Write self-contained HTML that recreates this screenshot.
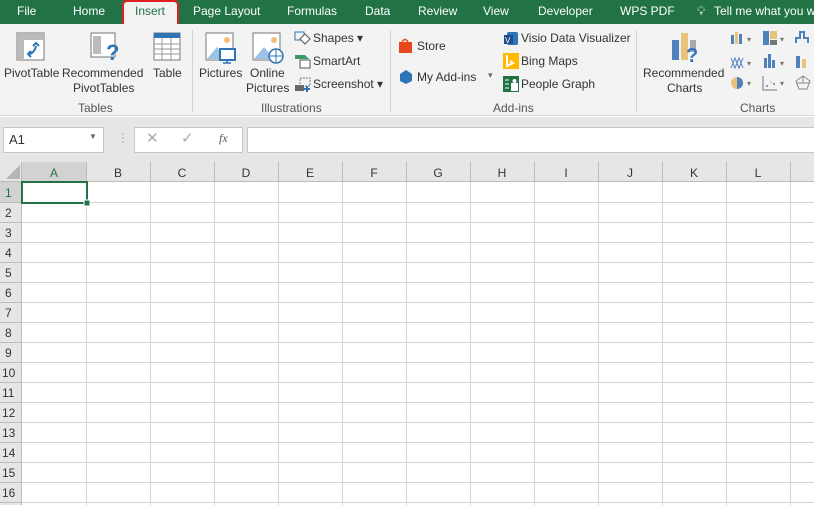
<!DOCTYPE html>
<html><head><style>
*{margin:0;padding:0;box-sizing:border-box}
body{width:814px;height:505px;overflow:hidden;background:#fff;font-family:"Segoe UI","Liberation Sans",sans-serif;font-size:12px;color:#222;position:relative}
.abs{position:absolute}
#tabs{left:0;top:0;width:814px;height:24px;background:#217346}
.tab{position:absolute;top:4px;color:#fff;font-size:12px;white-space:nowrap}
#rib{left:0;top:24px;width:814px;height:92px;background:#f3f3f3;border-bottom:1px solid #d6d6d6}
.t{position:absolute;font-size:12px;color:#333;white-space:nowrap}
.g{position:absolute;font-size:12px;color:#555;white-space:nowrap}
.sep{position:absolute;top:30px;width:1px;height:82px;background:#d4d4d4}
#fb{left:0;top:117px;width:814px;height:45px;background:#e6e6e6}
.box{position:absolute;background:#fff;border:1px solid #c6c6c6}
#grid{left:0;top:162px}
</style></head><body>
<div id="tabs" class="abs">
<div class="tab" style="left:17px">File</div>
<div class="tab" style="left:73px">Home</div>
<div class="abs" style="left:122px;top:0px;width:57px;height:28px;background:#f3f3f3;border:2px solid #e02020;border-radius:5px"></div>
<div class="tab" style="left:135px;color:#217346">Insert</div>
<div class="tab" style="left:193px">Page Layout</div>
<div class="tab" style="left:287px">Formulas</div>
<div class="tab" style="left:365px">Data</div>
<div class="tab" style="left:418px">Review</div>
<div class="tab" style="left:483px">View</div>
<div class="tab" style="left:538px">Developer</div>
<div class="tab" style="left:620px">WPS PDF</div>
<div class="tab" style="left:697px">&#x1F4A1;&#xFE0E;</div>
<div class="tab" style="left:714px">Tell me what you w</div>
</div>
<div id="rib" class="abs"></div>
<svg class="abs" style="left:16px;top:32px" width="30" height="30"><rect x="1" y="1" width="27" height="27" fill="#fff" stroke="#777"/><rect x="2" y="2" width="25" height="6" fill="#bbb"/><rect x="2" y="2" width="6" height="25" fill="#bbb"/><path d="M12 22 q6 0 8 -8 M17 14 l3 -3 3 3 M15 19 l-3 3 3 3" stroke="#2e75b6" stroke-width="2" fill="none"/></svg>
<svg class="abs" style="left:90px;top:32px" width="32" height="30"><rect x="1" y="1" width="24" height="24" fill="#fff" stroke="#777"/><rect x="3" y="4" width="8" height="18" fill="#bbb"/><text x="16" y="28" font-size="22" font-weight="bold" fill="#2e75b6" font-family="Liberation Sans">?</text></svg>
<svg class="abs" style="left:153px;top:32px" width="28" height="30"><rect x="1" y="1" width="26" height="27" fill="#fff" stroke="#777"/><rect x="1" y="1" width="26" height="5" fill="#2e75b6"/><path d="M1 12h26M1 17h26M1 22h26M9 6v22M18 6v22" stroke="#999"/></svg>
<div class="t" style="left:4px;top:66px">PivotTable</div>
<div class="t" style="left:62px;top:66px">Recommended</div>
<div class="t" style="left:73px;top:81px">PivotTables</div>
<div class="t" style="left:153px;top:66px">Table</div>
<div class="g" style="left:78px;top:101px">Tables</div>
<div class="sep" style="left:192px"></div>
<svg class="abs" style="left:205px;top:32px" width="32" height="32"><rect x="1" y="1" width="27" height="27" fill="#fff" stroke="#777"/><circle cx="22" cy="8" r="3" fill="#f0c070"/><path d="M2 27 l10 -12 10 12z" fill="#9cc3e6"/><rect x="15" y="17" width="15" height="11" fill="#fff" stroke="#2e75b6" stroke-width="2"/><path d="M22 28v3M18 31h8" stroke="#2e75b6" stroke-width="1.5"/></svg>
<svg class="abs" style="left:252px;top:32px" width="32" height="32"><rect x="1" y="1" width="27" height="27" fill="#fff" stroke="#777"/><circle cx="22" cy="8" r="3" fill="#f0c070"/><path d="M2 27 l10 -12 10 12z" fill="#9cc3e6"/><circle cx="24" cy="24" r="7" fill="#fff" stroke="#2e75b6" stroke-width="1.5"/><path d="M17 24h14M24 17v14" stroke="#2e75b6"/></svg>
<div class="t" style="left:199px;top:66px">Pictures</div>
<div class="t" style="left:250px;top:66px">Online</div>
<div class="t" style="left:246px;top:81px">Pictures</div>
<svg class="abs" style="left:294px;top:31px" width="18" height="16"><rect x="1" y="1" width="9" height="8" fill="none" stroke="#2e75b6"/><path d="M11 3 l5 5 -5 5 -5 -5z" fill="#fff" stroke="#555"/></svg>
<div class="t" style="left:313px;top:31px">Shapes ▾</div>
<svg class="abs" style="left:294px;top:53px" width="18" height="16"><path d="M1 2h10l4 4H1z" fill="#3a9a6a"/><rect x="6" y="7" width="10" height="8" fill="#fff" stroke="#555"/></svg>
<div class="t" style="left:313px;top:54px">SmartArt</div>
<svg class="abs" style="left:294px;top:77px" width="18" height="16"><rect x="1" y="8" width="9" height="6" fill="#666"/><rect x="6" y="1" width="10" height="8" fill="none" stroke="#777" stroke-dasharray="2 1"/><path d="M13 9v6M10 12h6" stroke="#2e75b6" stroke-width="2"/></svg>
<div class="t" style="left:313px;top:77px">Screenshot ▾</div>
<div class="g" style="left:261px;top:101px">Illustrations</div>
<div class="sep" style="left:390px"></div>
<svg class="abs" style="left:398px;top:38px" width="16" height="16"><rect x="1" y="4" width="13" height="11" fill="#e8491c"/><path d="M4 4 q3 -5 6 0" stroke="#e8491c" fill="none" stroke-width="1.5"/></svg>
<div class="t" style="left:417px;top:39px">Store</div>
<svg class="abs" style="left:398px;top:69px" width="16" height="16"><path d="M8 1 l6 4 v7 l-6 3 -6 -3 v-7z" fill="#2e75b6"/></svg>
<div class="t" style="left:417px;top:70px">My Add-ins</div>
<div class="t" style="left:488px;top:70px;font-size:9px;color:#666">▾</div>
<svg class="abs" style="left:503px;top:31px" width="16" height="16"><rect x="4" y="1" width="11" height="13" rx="2" fill="#2e75b6"/><rect x="1" y="4" width="9" height="9" fill="#1e4e8c"/><text x="2" y="12" font-size="8" fill="#fff" font-family="Liberation Sans">V</text></svg>
<div class="t" style="left:521px;top:31px">Visio Data Visualizer</div>
<svg class="abs" style="left:503px;top:53px" width="16" height="16"><rect x="0" y="0" width="16" height="16" fill="#ffb900"/><path d="M4 2v11l6 -3 -3 -2" stroke="#fff" stroke-width="2" fill="none"/></svg>
<div class="t" style="left:521px;top:54px">Bing Maps</div>
<svg class="abs" style="left:503px;top:76px" width="16" height="16"><rect x="0" y="0" width="16" height="16" fill="#217346"/><rect x="8" y="7" width="7" height="8" fill="#fff"/><circle cx="11.5" cy="5" r="2" fill="#fff"/><path d="M2 4h4M2 8h4M2 12h4" stroke="#fff"/></svg>
<div class="t" style="left:521px;top:77px">People Graph</div>
<div class="g" style="left:493px;top:101px">Add-ins</div>
<div class="sep" style="left:636px"></div>
<svg class="abs" style="left:670px;top:32px" width="32" height="32"><rect x="2" y="8" width="7" height="20" fill="#4f81bd"/><rect x="11" y="1" width="7" height="27" fill="#eac37a"/><rect x="20" y="8" width="6" height="12" fill="#aaa"/><text x="16" y="30" font-size="20" font-weight="bold" fill="#2e75b6" font-family="Liberation Sans">?</text></svg>
<div class="t" style="left:643px;top:66px">Recommended</div>
<div class="t" style="left:667px;top:81px">Charts</div>
<svg class="abs" style="left:730px;top:30px" width="84" height="64">
<rect x="1" y="5" width="3" height="9" fill="#4f81bd"/><rect x="5" y="2" width="3" height="12" fill="#eac37a"/><rect x="9" y="4" width="3" height="10" fill="#4f81bd"/><text x="17" y="12" font-size="8" fill="#777">▾</text>
<rect x="33" y="1" width="6" height="14" fill="#4f81bd"/><rect x="40" y="1" width="7" height="8" fill="#eac37a"/><rect x="40" y="10" width="7" height="5" fill="#777"/><text x="50" y="12" font-size="8" fill="#777">▾</text>
<path d="M66 13v-5h4v-6h4v6h4v5" stroke="#4f81bd" stroke-width="2" fill="none"/>
<path d="M1 38l4 -10 4 10 4 -10 M1 28l4 10 4 -10 4 10" stroke="#4f81bd" fill="none"/><text x="17" y="36" font-size="8" fill="#777">▾</text>
<rect x="34" y="28" width="3" height="10" fill="#4f81bd"/><rect x="38" y="24" width="3" height="14" fill="#4f81bd"/><rect x="42" y="30" width="3" height="8" fill="#4f81bd"/><text x="50" y="36" font-size="8" fill="#777">▾</text>
<rect x="66" y="26" width="4" height="12" fill="#4f81bd"/><rect x="72" y="29" width="4" height="9" fill="#eac37a"/>
<circle cx="7" cy="53" r="6" fill="#eac37a"/><path d="M7 53v-6a6 6 0 0 1 0 12z" fill="#4f81bd"/><text x="17" y="56" font-size="8" fill="#777">▾</text>
<path d="M33 46v14h14" stroke="#777" fill="none"/><circle cx="37" cy="56" r="1" fill="#4f81bd"/><circle cx="41" cy="52" r="1" fill="#eac37a"/><circle cx="44" cy="54" r="1" fill="#4f81bd"/><text x="50" y="56" font-size="8" fill="#777">▾</text>
<path d="M73 46l7 5 -3 8h-8l-3 -8z M73 46v7M66 53h14" stroke="#888" fill="none"/>
</svg>
<div class="g" style="left:740px;top:101px">Charts</div>
<div id="fb" class="abs"></div>
<div class="box" style="left:3px;top:127px;width:101px;height:26px"></div>
<div class="t" style="left:9px;top:132px;font-size:13px">A1</div>
<div class="t" style="left:89px;top:132px;font-size:8px;color:#666">▼</div>
<div class="t" style="left:117px;top:131px;color:#aaa">⋮</div>
<div class="box" style="left:134px;top:127px;width:109px;height:26px"></div>
<div class="t" style="left:146px;top:129px;font-size:15px;color:#aaa">✕</div>
<div class="t" style="left:181px;top:129px;font-size:15px;color:#aaa">✓</div>
<div class="t" style="left:219px;top:131px;font-family:'Liberation Serif',serif;font-style:italic;color:#555">fx</div>
<div class="box" style="left:247px;top:127px;width:570px;height:26px"></div>
<svg id="grid" class="abs" width="814" height="343" font-family="Liberation Sans, sans-serif" font-size="12">
<rect x="0" y="0" width="814" height="20" fill="#e6e6e6"/>
<rect x="0" y="0" width="22" height="343" fill="#e6e6e6"/>
<rect x="22" y="0" width="64" height="20" fill="#d2d2d2"/>
<rect x="0" y="20" width="22" height="20" fill="#d2d2d2"/>
<path d="M6 17h14v-14z" fill="#b4b4b4"/>
<g stroke="#d4d4d4">
<path d="M22 40.5h792M22 60.5h792M22 80.5h792M22 100.5h792M22 120.5h792M22 140.5h792M22 160.5h792M22 180.5h792M22 200.5h792M22 220.5h792M22 240.5h792M22 260.5h792M22 280.5h792M22 300.5h792M22 320.5h792M22 340.5h792"/>
<path d="M86.5 20v323M150.5 20v323M214.5 20v323M278.5 20v323M342.5 20v323M406.5 20v323M470.5 20v323M534.5 20v323M598.5 20v323M662.5 20v323M726.5 20v323M790.5 20v323"/>
</g>
<g stroke="#bcbcbc"><path d="M86.5 0v20M150.5 0v20M214.5 0v20M278.5 0v20M342.5 0v20M406.5 0v20M470.5 0v20M534.5 0v20M598.5 0v20M662.5 0v20M726.5 0v20M790.5 0v20"/>
<path d="M0 19.5h814M21.5 0v343"/>
<path d="M0 40.5h22M0 60.5h22M0 80.5h22M0 100.5h22M0 120.5h22M0 140.5h22M0 160.5h22M0 180.5h22M0 200.5h22M0 220.5h22M0 240.5h22M0 260.5h22M0 280.5h22M0 300.5h22M0 320.5h22M0 340.5h22"/></g>
<g text-anchor="middle" fill="#333">
<text x="54" y="15" fill="#217346">A</text><text x="118" y="15">B</text><text x="182" y="15">C</text><text x="246" y="15">D</text><text x="310" y="15">E</text><text x="374" y="15">F</text><text x="438" y="15">G</text><text x="502" y="15">H</text><text x="566" y="15">I</text><text x="630" y="15">J</text><text x="694" y="15">K</text><text x="758" y="15">L</text>
</g>
<g fill="#333" font-size="12">
<text x="5" y="35" fill="#217346">1</text><text x="5" y="55">2</text><text x="5" y="75">3</text><text x="5" y="95">4</text><text x="5" y="115">5</text><text x="5" y="135">6</text><text x="5" y="155">7</text><text x="5" y="175">8</text><text x="5" y="195">9</text><text x="2" y="215">10</text><text x="2" y="235">11</text><text x="2" y="255">12</text><text x="2" y="275">13</text><text x="2" y="295">14</text><text x="2" y="315">15</text><text x="2" y="335">16</text>
</g>
<rect x="22" y="20" width="65" height="21" fill="none" stroke="#217346" stroke-width="2"/>
<rect x="84" y="38" width="6" height="6" fill="#217346" stroke="#fff"/>
</svg>
</body></html>
